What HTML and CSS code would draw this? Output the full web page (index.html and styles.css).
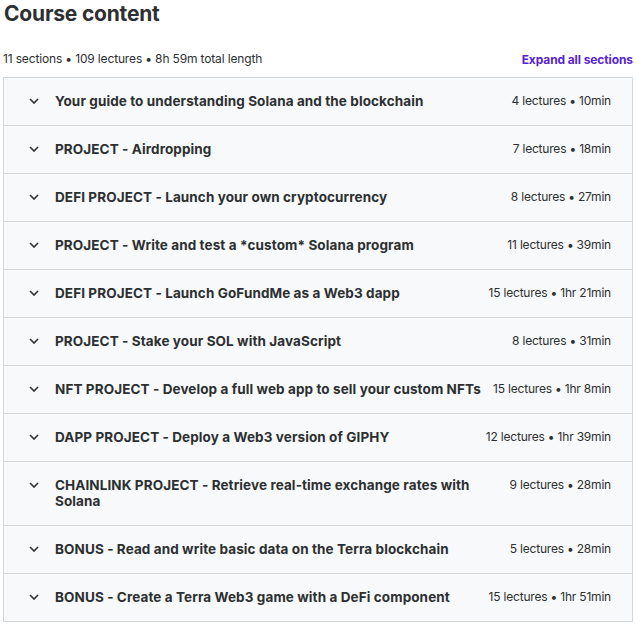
FILE: index.html
```html
<!DOCTYPE html>
<html lang="en">
<head>
  <meta charset="UTF-8" />
  <title>Course content</title>
  <link rel="stylesheet" href="styles.css">
</head>
<body>

<main class="curriculum">
  <h2>Course content</h2>

  <div class="summary">
    <span>11 sections • 109 lectures • 8h 59m total length</span>
    <button class="expand">Expand all sections</button>
  </div>

  <div class="sections" id="sections"></div>
</main>

<script>
  const sections = [
    ['Your guide to understanding Solana and the blockchain', '4 lectures • 10min'],
    ['PROJECT - Airdropping', '7 lectures • 18min'],
    ['DEFI PROJECT - Launch your own cryptocurrency', '8 lectures • 27min'],
    ['PROJECT - Write and test a *custom* Solana program', '11 lectures • 39min'],
    ['DEFI PROJECT - Launch GoFundMe as a Web3 dapp', '15 lectures • 1hr 21min'],
    ['PROJECT - Stake your SOL with JavaScript', '8 lectures • 31min'],
    ['NFT PROJECT - Develop a full web app to sell your custom NFTs', '15 lectures • 1hr 8min'],
    ['DAPP PROJECT - Deploy a Web3 version of GIPHY', '12 lectures • 1hr 39min'],
    ['CHAINLINK PROJECT - Retrieve real-time exchange rates with Solana', '9 lectures • 28min'],
    ['BONUS - Read and write basic data on the Terra blockchain', '5 lectures • 28min'],
    ['BONUS - Create a Terra Web3 game with a DeFi component', '15 lectures • 1hr 51min']
  ];

  const chevron = '<svg width="10" height="6" viewBox="0 0 10 6"><polyline points="1,1 5,5 9,1" fill="none" stroke="#2d2f31" stroke-width="1.6" /></svg>';

  const list = document.getElementById('sections');
  sections.forEach(([title, meta]) => {
    const row = document.createElement('div');
    row.className = 'section';
    row.innerHTML = `
      <span class="chevron">${chevron}</span>
      <span class="title">${title}</span>
      <span class="meta">${meta}</span>
    `;
    list.appendChild(row);
  });
</script>

</body>
</html>
```

FILE: styles.css
```css
body {
  font-family: Inter, 'Liberation Sans', sans-serif;
  margin: 0;
  padding: 0;
  background: white;
  color: #2d2f31;
}
.curriculum {
  width: 630px;
  padding: 0 4px 0 3px;
}
h2 {
  margin: 0;
  padding: 1px 0 0 1px;
  font-size: 21px;
  line-height: 26px;
  font-weight: 700;
  letter-spacing: -0.2px;
}
.summary {
  display: flex;
  justify-content: space-between;
  align-items: center;
  margin-top: 21px;
  height: 20px;
  font-size: 12px;
  letter-spacing: -0.15px;
  margin-bottom: 9px;
}
.expand {
  background: none;
  border: none;
  padding: 0;
  font-family: inherit;
  font-size: 12px;
  letter-spacing: -0.1px;
  font-weight: 700;
  color: #5624d0;
  cursor: pointer;
  margin-top: 2px;
}
.sections {
  border: 1px solid #d1d7dc;
  border-bottom: none;
}
.section {
  display: flex;
  align-items: flex-start;
  background: #f7f9fa;
  border-bottom: 1px solid #d1d7dc;
  padding: 15px 21px 16px 25px;
  line-height: 16px;
}
.chevron {
  width: 26px;
  flex-shrink: 0;
  height: 16px;
  display: flex;
  align-items: center;
}
.title {
  flex: 1;
  font-size: 13.5px;
  letter-spacing: 0.1px;
  font-weight: 700;
  padding-right: 6px;
}
.meta {
  font-size: 12px;
  letter-spacing: -0.2px;
  white-space: nowrap;
}
```
